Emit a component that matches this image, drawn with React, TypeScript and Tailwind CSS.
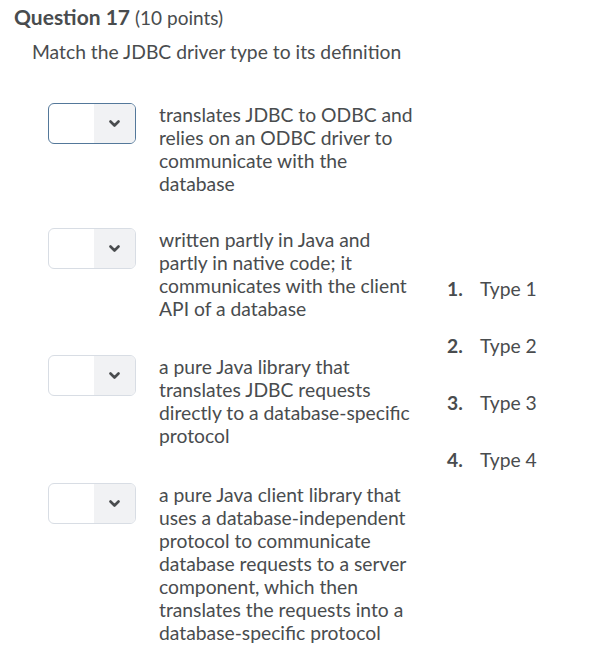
import React from 'react';

const prompts = [
  { text: 'translates JDBC to ODBC and relies on an ODBC driver to communicate with the database', gap: 'mt-0' },
  { text: 'written partly in Java and partly in native code; it communicates with the client API of a database', gap: 'mt-[33px]' },
  { text: 'a pure Java library that translates JDBC requests directly to a database-specific protocol', gap: 'mt-[35px]' },
  {
    text: 'a pure Java client library that uses a database-independent protocol to communicate database requests to a server component, which then translates the requests into a database-specific protocol',
    gap: 'mt-[36px]',
  },
];

const choices = ['Type 1', 'Type 2', 'Type 3', 'Type 4'];

function Chevron() {
  return (
    <svg width="11" height="8" viewBox="0 0 11 8" className="block">
      <path d="M1.5 1.5 L5.5 5.5 L9.5 1.5" fill="none" stroke="#494c4e" strokeWidth="2.6" strokeLinecap="round" strokeLinejoin="round" />
    </svg>
  );
}

function MatchSelect({ focused }: { focused: boolean }) {
  return (
    <div
      className={`flex h-[41px] w-[88px] shrink-0 overflow-hidden rounded-[6px] border bg-white ${
        focused ? 'border-[#54789a]' : 'border-[#d8dde4]'
      }`}
    >
      <div className="flex-1" />
      <div className="flex w-[41px] items-center justify-center bg-[#f1f2f4]">
        <Chevron />
      </div>
    </div>
  );
}

export default function App() {
  return (
    <div className="min-h-screen bg-white pl-[14px] pt-[5px] text-[#494c4e]" style={{ fontFamily: 'Lato, "Liberation Sans", sans-serif' }}>
      <h2 className="flex h-[24px] items-baseline gap-[5px] leading-[24px]">
        <span className="text-[21px] font-bold">Question 17</span>
        <span className="text-[19px]">(10 points)</span>
      </h2>
      <p className="mt-[11px] pl-[18px] text-[19.3px] leading-[23px]">Match the JDBC driver type to its definition</p>

      <div className="mt-[40px] flex items-center pl-[34px]">
        <div className="flex w-[370px] flex-col">
          {prompts.map((p, i) => (
            <div key={i} className={`flex items-start gap-[23px] ${p.gap}`}>
              <MatchSelect focused={i === 0} />
              <p className="w-[258px] text-[19.3px] leading-[23px]">{p.text}</p>
            </div>
          ))}
        </div>
        <ol className="ml-[29px] flex flex-col gap-[34px] text-[19.3px] leading-[23px]">
          {choices.map((c, i) => (
            <li key={c} className="flex">
              <span className="w-[33px] font-bold">{i + 1}.</span>
              <span>{c}</span>
            </li>
          ))}
        </ol>
      </div>
    </div>
  );
}
